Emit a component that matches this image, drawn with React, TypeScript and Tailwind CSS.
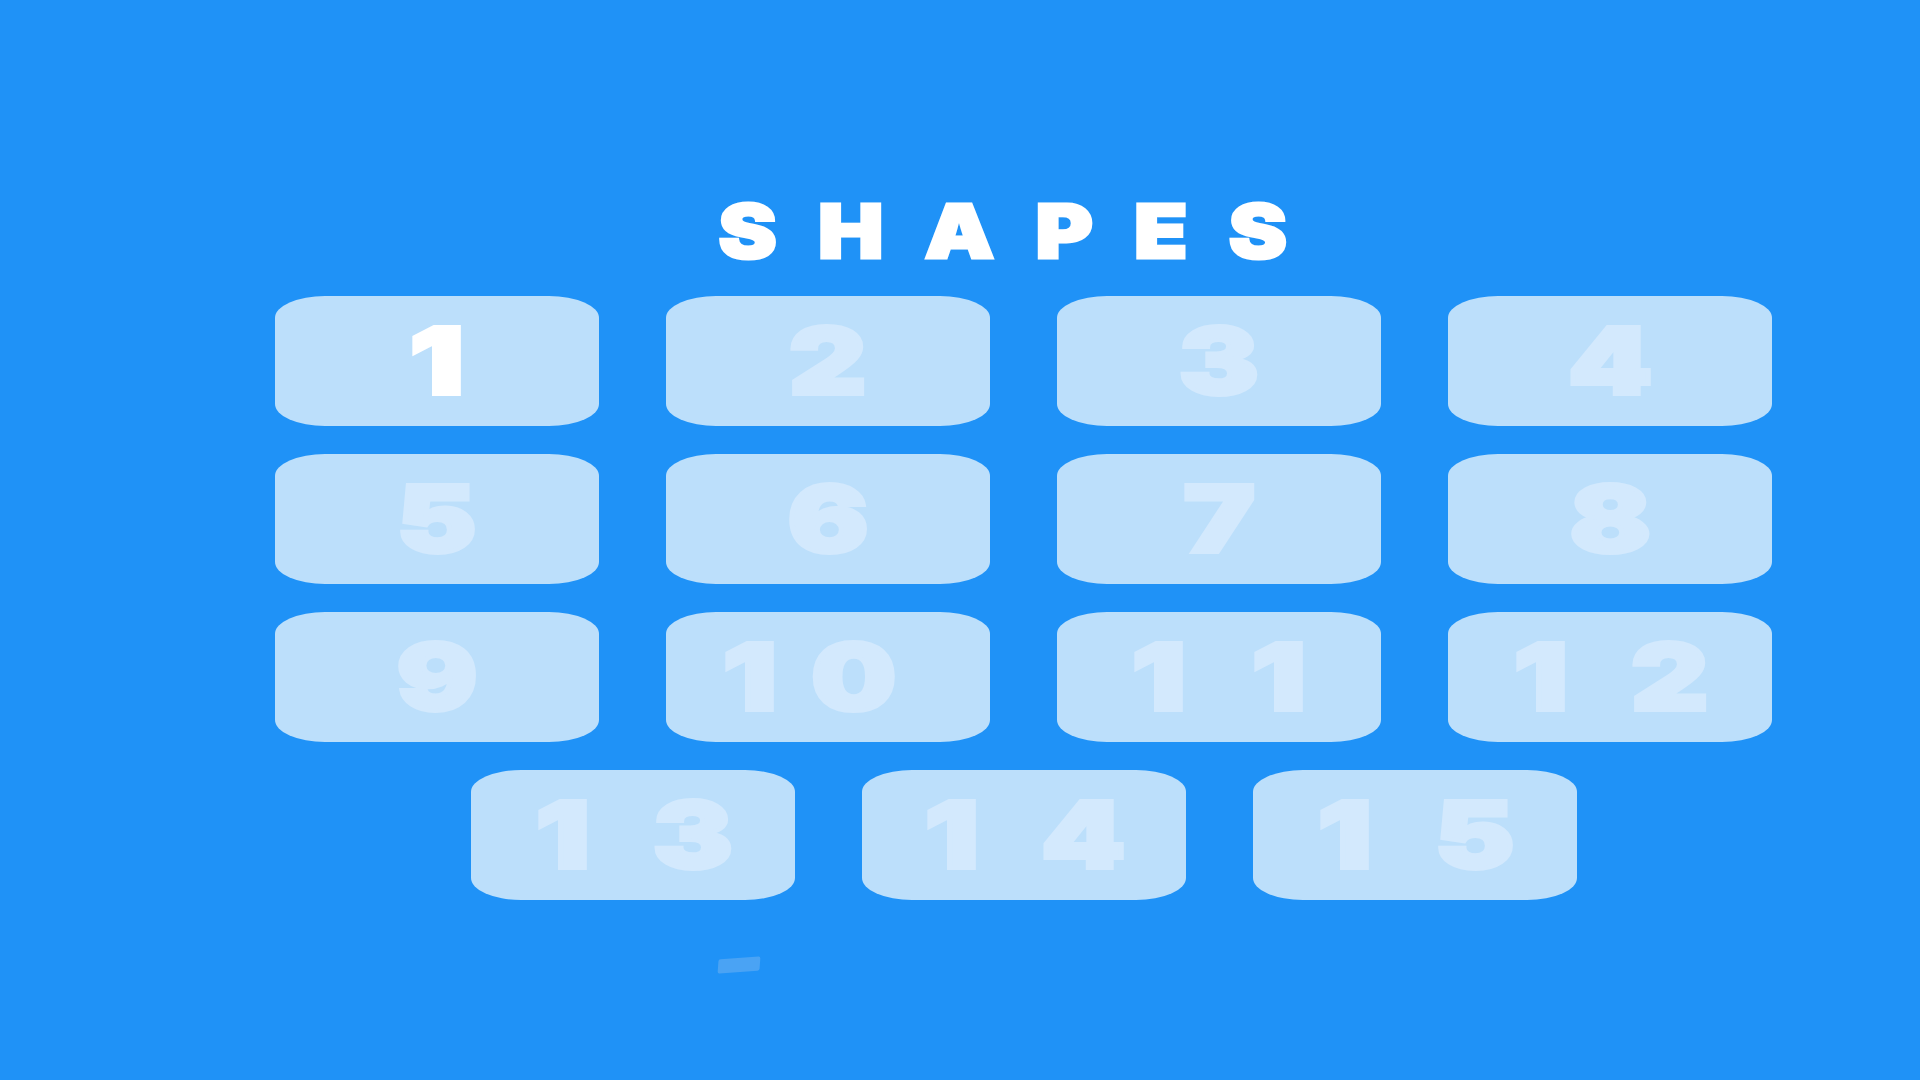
import React from 'react'

const levels = Array.from({ length: 15 }, (_, i) => i + 1)

function LevelButton({ n, unlocked }: { n: number; unlocked: boolean }) {
  const chars = String(n).split('')
  // "10" sits tighter and a bit to the left
  const spacing = n === 10 ? 'gap-[50px] pr-[40px]' : 'gap-[78px]'
  return (
    <div
      className={
        'w-[324px] h-[130px] rounded-[50px_/_22px] bg-[#bcdffb] flex items-center justify-center cursor-pointer ' +
        spacing +
        ' ' +
        (unlocked ? 'text-white' : 'text-[#d3e9fd]')
      }
    >
      {chars.map((c, i) => (
        <span
          key={i}
          className="inline-block scale-x-130 text-[92px] leading-none font-black [font-family:Inter,'Liberation_Sans',sans-serif] [-webkit-text-stroke:4px_currentColor]"
        >
          {c}
        </span>
      ))}
    </div>
  )
}

export default function App() {
  return (
    <div className="w-full h-screen bg-[#1f92f7] overflow-hidden pl-[127px]">
      <div className="w-full flex flex-col items-center">
        <h1 className="mt-[194px] scale-x-[1.18] text-white text-[74px] leading-none font-black tracking-[35px] [font-family:Inter,'Liberation_Sans',sans-serif] [-webkit-text-stroke:3px_white]">
          SHAPES
        </h1>

        <div className="mt-[28px] w-[1497px] flex flex-wrap justify-center gap-x-[67px] gap-y-[28px]">
          {levels.map((n) => (
            <LevelButton key={n} n={n} unlocked={n === 1} />
          ))}
        </div>
      </div>

      {/* little scrap near the bottom */}
      <div className="w-full mt-[58px]">
        <div className="ml-[591px] w-[42px] h-[14px] bg-[#4aa3f4] -rotate-[4deg] skew-x-[-8deg] rounded-[2px]" />
      </div>
    </div>
  )
}
